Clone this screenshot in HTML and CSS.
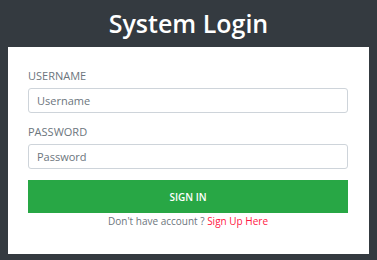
FILE: index.html
```html
<!DOCTYPE html>
<html lang="en">
<head>
  <meta charset="UTF-8">
  <meta name="viewport" content="width=device-width, initial-scale=1.0">
  <title>System Login</title>
  <link rel="stylesheet" href="styles.css">
</head>
<body>
  <header>
    <h1>System Login</h1>
  </header>

  <main class="login-card">
    <form class="login-form" onsubmit="return false;">
      <label class="field-label" for="username">USERNAME</label>
      <input class="field-input" id="username" type="text" placeholder="Username">

      <label class="field-label" for="password">PASSWORD</label>
      <input class="field-input" id="password" type="password" placeholder="Password">

      <button class="signin-btn" type="submit">SIGN IN</button>
      <p class="signup-note">Don't have account ? <a href="#" class="signup-link">Sign Up Here</a></p>
    </form>
  </main>
</body>
</html>
```

FILE: styles.css
```css
* {
  margin: 0;
  padding: 0;
  box-sizing: border-box;
}

body {
  font-family: 'Open Sans', 'Noto Sans', sans-serif;
  background-color: #343a40;
  min-height: 100vh;
}

header {
  height: 47px;
  display: flex;
  align-items: center;
  justify-content: center;
}

h1 {
  color: #ffffff;
  font-size: 25px;
  font-weight: 600;
  line-height: 1;
}

.login-card {
  display: block;
  margin: 0 8px;
  background-color: #ffffff;
  padding: 20px 21px 25px 20px;
}

.login-form {
  display: flex;
  flex-direction: column;
}

.field-label {
  font-size: 11px;
  color: #6c757d;
  line-height: 18px;
  margin-bottom: 3px;
}

.field-input {
  height: 25px;
  border: 1px solid #ced4da;
  border-radius: 3px;
  padding: 0 8px;
  font-family: inherit;
  font-size: 11px;
  color: #495057;
  margin-bottom: 10px;
}

.field-input::placeholder {
  color: #6c757d;
}

.signin-btn {
  margin-top: 1px;
  height: 33px;
  border: none;
  background-color: #28a745;
  color: #ffffff;
  font-family: inherit;
  font-size: 10px;
  font-weight: 600;
  cursor: pointer;
}

.signup-note {
  text-align: center;
  font-size: 10px;
  line-height: 16px;
  color: #6c757d;
}

.signup-link {
  color: #ff1744;
  text-decoration: none;
}
```
